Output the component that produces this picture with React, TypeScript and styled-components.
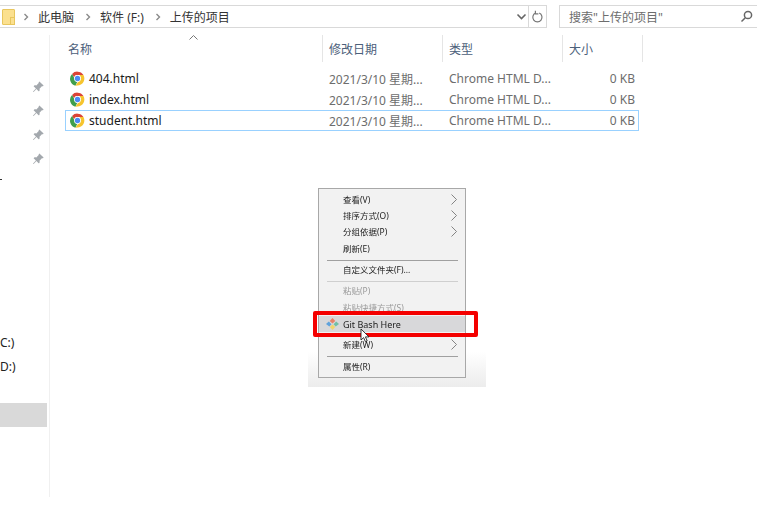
import React from 'react';
import styled, { createGlobalStyle } from 'styled-components';
import { BsPinAngleFill } from 'react-icons/bs';

const GlobalStyle = createGlobalStyle`
  html, body {
    margin: 0;
    background: #fff;
  }
  * {
    box-sizing: border-box;
  }
`;

const files = ['404.html', 'index.html', 'student.html'];

const ChromeIcon = () => (
  <svg width="15" height="15" viewBox="0 0 48 48">
    <path d="M24 2a22 22 0 0 1 19.05 11H24a11 11 0 0 0-10.4 7.4L6.6 9.9A22 22 0 0 1 24 2z" fill="#db4437" />
    <path d="M6.6 9.9l9.5 16.4a9.5 9.5 0 0 0 7 8.6l-5.9 12A22 22 0 0 1 6.6 9.9z" fill="#3f9e4d" />
    <path d="M43.05 13A22 22 0 0 1 24 46l-6.8.95 9.5-13a11 11 0 0 0 5.9-15.95L30 13z" fill="#f6c42e" />
    <circle cx="24" cy="24" r="11" fill="#fff" />
    <circle cx="24" cy="24" r="8.5" fill="#4c8bf5" />
  </svg>
);

const Chevron = ({ size = 8 }: { size?: number }) => (
  <svg width={size} height={size} viewBox="0 0 8 8" fill="none" stroke="#8a8a8a" strokeWidth="1.4">
    <path d="M2.5 1l3 3-3 3" />
  </svg>
);

const SubmenuArrow = () => (
  <svg width="6" height="11" viewBox="0 0 6 11" fill="none" stroke="#777" strokeWidth="0.9">
    <path d="M.5.5l5 5-5 5" />
  </svg>
);

const GitIcon = () => (
  <svg width="13" height="12" viewBox="0 0 13 12">
    <path d="M6.5 0l2.8 3-2.8 2.6L3.7 3z" fill="#e8836a" />
    <path d="M2.8 3.6l2.7 2.6-2.2 2.3L0 6z" fill="#5fa2dc" />
    <path d="M10.2 3.6L13 6l-3.3 2.5-2.2-2.3z" fill="#72bfa6" />
    <path d="M6.5 6.6l2.7 2.5-2.7 2.9-2.7-2.9z" fill="#f1d56c" />
  </svg>
);

type Entry = {
  label?: string;
  arrow?: boolean;
  disabled?: boolean;
  active?: boolean;
  gap?: number;
  divider?: boolean;
  light?: boolean;
};

const menuItems: Entry[] = [
  { label: '查看(V)', arrow: true },
  { label: '排序方式(O)', arrow: true },
  { label: '分组依据(P)', arrow: true },
  { label: '刷新(E)', gap: 1 },
  { divider: true },
  { label: '自定义文件夹(F)...' },
  { divider: true, light: true },
  { label: '粘贴(P)', disabled: true },
  { label: '粘贴快捷方式(S)', disabled: true, gap: 1 },
  { label: 'Git Bash Here', active: true, gap: 1 },
  { label: '新建(W)', arrow: true, gap: 4 },
  { divider: true },
  { label: '属性(R)', gap: 1 },
];

const App = () => {
  return (
    <Page>
      <GlobalStyle />
      <TopBar>
        <AddressBar>
          <FolderIcon />
          <Crumb>
            <Chevron />
            <span>此电脑</span>
          </Crumb>
          <Crumb>
            <Chevron />
            <span>软件 (F:)</span>
          </Crumb>
          <Crumb>
            <Chevron />
            <span>上传的项目</span>
          </Crumb>
          <AddressTools>
            <svg width="11" height="8" viewBox="0 0 11 8" fill="none" stroke="#666" strokeWidth="1.6">
              <path d="M1.5 1.5l4 4 4-4" />
            </svg>
          </AddressTools>
          <RefreshButton>
            <svg width="13" height="14" viewBox="0 0 13 14" fill="none" stroke="#777" strokeWidth="1.2">
              <path d="M8.2 3a4.6 4.6 0 1 1-3.6 0" />
              <path d="M4.4.8v3h3" />
            </svg>
          </RefreshButton>
        </AddressBar>
        <SearchBox>
          <span>搜索"上传的项目"</span>
          <svg width="13" height="13" viewBox="0 0 13 13" fill="none" stroke="#666" strokeWidth="1.5">
            <circle cx="8" cy="5" r="3.6" />
            <path d="M5.3 7.7L1.5 11.5" />
          </svg>
        </SearchBox>
      </TopBar>

      <Body>
        <Sidebar>
          <PinRow><BsPinAngleFill size={12} /></PinRow>
          <PinRow><BsPinAngleFill size={12} /></PinRow>
          <PinRow><BsPinAngleFill size={12} /></PinRow>
          <PinRow><BsPinAngleFill size={12} /></PinRow>
          <NavDash />
          <NavRow $top={150}>C:)</NavRow>
          <NavRow>D:)</NavRow>
          <NavSelected />
        </Sidebar>

        <FileList>
          <HeaderRow>
            <SortMark>
              <svg width="9" height="5" viewBox="0 0 9 5" fill="none" stroke="#777">
                <path d="M.5 4.5l4-4 4 4" />
              </svg>
            </SortMark>
            <HeaderCell>名称</HeaderCell>
            <HeaderCell $divider>修改日期</HeaderCell>
            <HeaderCell $divider>类型</HeaderCell>
            <HeaderCell $divider $last>大小</HeaderCell>
          </HeaderRow>
          <Rows>
            {files.map((name) => (
              <FileRow key={name} $selected={name === 'student.html'}>
                <NameCell>
                  <ChromeIcon />
                  <span>{name}</span>
                </NameCell>
                <DetailCell>2021/3/10 星期...</DetailCell>
                <DetailCell>Chrome HTML D...</DetailCell>
                <SizeCell>0 KB</SizeCell>
              </FileRow>
            ))}
          </Rows>
        </FileList>
      </Body>

      <MenuPicture>
        <ContextMenu>
          {menuItems.map((item, i) =>
            item.divider ? (
              <MenuDivider key={i} $light={item.light} />
            ) : (
              <MenuItem key={i} $disabled={item.disabled} $active={item.active} $gap={item.gap}>
                {item.active && (
                  <MenuIcon>
                    <GitIcon />
                  </MenuIcon>
                )}
                <span>{item.label}</span>
                {item.arrow && <SubmenuArrow />}
              </MenuItem>
            )
          )}
        </ContextMenu>
        <Highlight />
        <Pointer width="10" height="15" viewBox="0 0 10 15">
          <path d="M1 1v11l2.6-2.4 1.8 4 1.8-.8-1.8-3.9H9z" fill="#fff" stroke="#222" strokeWidth="0.9" />
        </Pointer>
      </MenuPicture>
    </Page>
  );
};

export default App;

const Page = styled.div`
  background: #fff;
  color: #1a1a1a;
  display: flex;
  flex-direction: column;
  font-family: 'Noto Sans', 'Noto Sans CJK SC', sans-serif;
  font-size: 12px;
  height: 512px;
  overflow: hidden;
  padding-top: 5px;
  position: relative;
  width: 772px;
`;

const TopBar = styled.div`
  display: flex;
  flex: none;
  gap: 12px;
  height: 23px;
  padding-right: 15px;
`;

const AddressBar = styled.div`
  align-items: center;
  border: 1px solid #d9d9d9;
  border-left: 0;
  display: flex;
  padding-left: 2px;
  width: 547px;
`;

const FolderIcon = styled.div`
  background: #fbe08f;
  border: 1px solid #e8c65e;
  border-radius: 1px;
  flex: none;
  height: 16px;
  margin-right: 6px;
  position: relative;
  width: 13px;

  &::after {
    border: 1px solid #e8c65e;
    bottom: -1px;
    content: '';
    height: 6px;
    position: absolute;
    right: -1px;
    width: 3px;
  }
`;

const Crumb = styled.div`
  align-items: center;
  color: #333;
  display: flex;
  gap: 8px;
  margin-left: 1px;
  margin-right: 9px;
`;

const AddressTools = styled.div`
  align-items: center;
  display: flex;
  justify-content: flex-end;
  margin-left: auto;
  padding-right: 1px;
  width: 18px;
`;

const RefreshButton = styled.div`
  align-items: center;
  align-self: stretch;
  border-left: 1px solid #d9d9d9;
  display: flex;
  justify-content: center;
  width: 18px;
`;

const SearchBox = styled.div`
  align-items: center;
  border: 1px solid #d9d9d9;
  border-right: 0;
  color: #6d6d6d;
  display: flex;
  flex: 1;
  justify-content: space-between;
  padding: 0 4px 0 9px;
`;

const Body = styled.div`
  display: flex;
  flex: none;
  height: 470px;
  margin-top: 7px;
`;

const Sidebar = styled.div`
  border-right: 1px solid #f0f0f0;
  display: flex;
  flex: none;
  flex-direction: column;
  height: 462px;
  padding-top: 40px;
  width: 50px;
`;

const PinRow = styled.div`
  align-items: center;
  color: #a3a8ad;
  display: flex;
  flex: none;
  height: 24px;
  justify-content: flex-end;
  padding-right: 5px;
`;

const NavDash = styled.div`
  background: #333;
  flex: none;
  height: 1px;
  margin-top: 8px;
  width: 2px;
`;

const NavRow = styled.div<{ $top?: number }>`
  align-items: center;
  color: #222;
  display: flex;
  flex: none;
  height: 24px;
  margin-top: ${(p) => p.$top ?? 0}px;
`;

const NavSelected = styled.div`
  background: #d9d9d9;
  flex: none;
  height: 24px;
  margin: 25px 2px 0 0;
`;

const FileList = styled.div`
  display: flex;
  flex: 1;
  flex-direction: column;
`;

const HeaderRow = styled.div`
  display: grid;
  flex: none;
  grid-template-columns: 272px 120px 120px 81px;
  height: 27px;
  position: relative;
`;

const SortMark = styled.div`
  left: 139px;
  line-height: 0;
  position: absolute;
  top: 0;
`;

const HeaderCell = styled.div<{ $divider?: boolean; $last?: boolean }>`
  align-items: center;
  border-left: ${(p) => (p.$divider ? '1px solid #e5e5e5' : '0')};
  border-right: ${(p) => (p.$last ? '1px solid #e5e5e5' : '0')};
  color: #4c607a;
  display: flex;
  padding-left: ${(p) => (p.$divider ? '6px' : '18px')};
`;

const Rows = styled.div`
  display: flex;
  flex-direction: column;
  margin-top: 6px;
`;

const FileRow = styled.div<{ $selected?: boolean }>`
  align-items: center;
  border: 1px solid ${(p) => (p.$selected ? '#99d1ff' : 'transparent')};
  display: grid;
  grid-template-columns: 263px 120px 120px 66px;
  height: 21px;
  margin-left: 15px;
  width: 574px;
`;

const NameCell = styled.div`
  align-items: center;
  display: flex;
  gap: 4px;
  padding-left: 4px;
`;

const DetailCell = styled.div`
  color: #6d6d6d;
  white-space: nowrap;
`;

const SizeCell = styled(DetailCell)`
  text-align: right;
`;

const MenuPicture = styled.div`
  background: linear-gradient(#fff 82%, #ececec);
  height: 199px;
  left: 308px;
  padding-left: 10px;
  position: absolute;
  top: 188px;
  width: 178px;
`;

const ContextMenu = styled.div`
  background: #f2f2f2;
  border: 1px solid #a8a8a8;
  display: flex;
  filter: blur(0.35px);
  flex-direction: column;
  height: 190px;
  padding-top: 2px;
  width: 148px;
`;

const MenuItem = styled.div<{ $disabled?: boolean; $active?: boolean; $gap?: number }>`
  align-items: center;
  background: ${(p) => (p.$active ? '#d8d8da' : 'transparent')};
  color: ${(p) => (p.$disabled ? '#9a9a9a' : '#222')};
  display: flex;
  flex: none;
  font-size: ${(p) => (p.$active ? '9px' : '8.5px')};
  height: 16px;
  justify-content: space-between;
  margin-top: ${(p) => p.$gap ?? 0}px;
  padding: 0 8px 0 24px;
  position: relative;
`;

const MenuIcon = styled.span`
  left: 7px;
  line-height: 0;
  position: absolute;
  top: 2px;
`;

const MenuDivider = styled.div<{ $light?: boolean }>`
  background: ${(p) => (p.$light ? '#cfcfcf' : '#a0a0a0')};
  flex: none;
  height: 1px;
  margin: 4px 7px 0 8px;
`;

const Highlight = styled.div`
  border: 4px solid #f40000;
  border-radius: 2px;
  height: 26px;
  left: 5px;
  position: absolute;
  top: 123px;
  width: 165px;
`;

const Pointer = styled.svg`
  left: 52px;
  position: absolute;
  top: 140px;
`;
